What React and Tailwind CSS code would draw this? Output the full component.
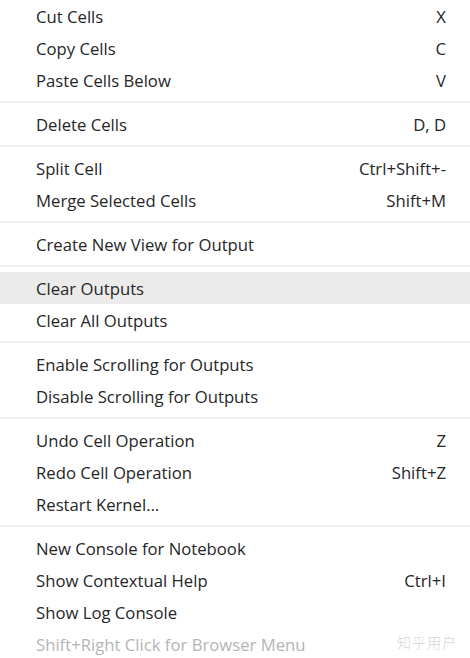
import React from "react";

const groups = [
  [
    { label: "Cut Cells", key: "X" },
    { label: "Copy Cells", key: "C" },
    { label: "Paste Cells Below", key: "V" },
  ],
  [{ label: "Delete Cells", key: "D, D" }],
  [
    { label: "Split Cell", key: "Ctrl+Shift+-" },
    { label: "Merge Selected Cells", key: "Shift+M" },
  ],
  [{ label: "Create New View for Output" }],
  [
    { label: "Clear Outputs", active: true },
    { label: "Clear All Outputs" },
  ],
  [
    { label: "Enable Scrolling for Outputs" },
    { label: "Disable Scrolling for Outputs" },
  ],
  [
    { label: "Undo Cell Operation", key: "Z" },
    { label: "Redo Cell Operation", key: "Shift+Z" },
    { label: "Restart Kernel…" },
  ],
  [
    { label: "New Console for Notebook" },
    { label: "Show Contextual Help", key: "Ctrl+I" },
    { label: "Show Log Console" },
    { label: "Shift+Right Click for Browser Menu", disabled: true },
  ],
];

const MenuItem = ({ item }) => (
  <div
    className={`flex h-8 items-center justify-between pl-9 pr-6 pt-[1px] ${
      item.active ? "bg-[#ebebeb]" : ""
    } ${item.disabled ? "text-[#b4b4b4]" : "text-[#262626]"}`}
  >
    <span>{item.label}</span>
    {item.key && <span>{item.key}</span>}
  </div>
);

export default function App() {
  return (
    <div
      className="relative h-[658px] w-[470px] overflow-hidden bg-white text-[16.7px]"
      style={{ fontFamily: '"Open Sans", "Noto Sans CJK SC", sans-serif' }}
    >
      {groups.map((group, gi) => (
        <div key={gi}>
          {gi > 0 && (
            <div className="flex h-3 items-center">
              <div className="h-[2px] w-full bg-[#f0f0f0]" />
            </div>
          )}
          {group.map((item) => (
            <MenuItem key={item.label} item={item} />
          ))}
        </div>
      ))}

      {/* watermark */}
      <div className="absolute bottom-[5px] right-[13px] text-[14px] font-light tracking-[1px] text-[#d6d6d6]">
        知乎用户
      </div>
    </div>
  );
}
